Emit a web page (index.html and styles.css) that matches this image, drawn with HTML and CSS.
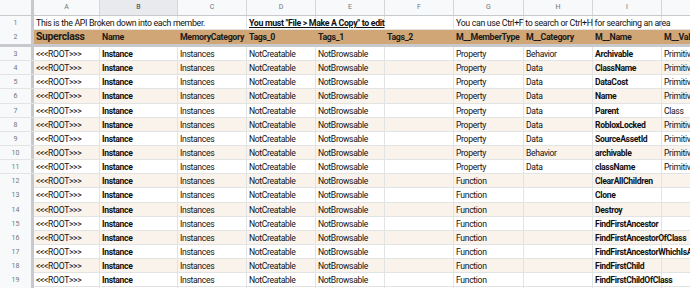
FILE: index.html
```
<!DOCTYPE html>
<html lang="en">
<head>
    <meta charset="UTF-8" />
    <title>API Dump - Sheet</title>
    <link rel="stylesheet" href="styles.css">
</head>
<body>
    <div class="sheet" id="sheet">
        <div class="row letters">
            <div class="rh corner"></div>
            <div class="cl">A</div>
            <div class="cl sel">B</div>
            <div class="cl">C</div>
            <div class="cl">D</div>
            <div class="cl">E</div>
            <div class="cl">F</div>
            <div class="cl">G</div>
            <div class="cl">H</div>
            <div class="cl">I</div>
            <div class="cl">J</div>
        </div>
        <div class="row top">
            <div class="rh">1</div>
            <div class="c spill">This is the API Broken down into each member.</div>
            <div class="c"></div>
            <div class="c"></div>
            <div class="c spill note">You must "File &gt; Make A Copy" to edit</div>
            <div class="c"></div>
            <div class="c"></div>
            <div class="c spill">You can use Ctrl+F to search or Ctrl+H for searching an area</div>
            <div class="c"></div>
            <div class="c"></div>
            <div class="c"></div>
        </div>
        <div class="row head">
            <div class="rh">2</div>
            <div class="c big">Superclass</div>
            <div class="c">Name</div>
            <div class="c">MemoryCategory</div>
            <div class="c">Tags_0</div>
            <div class="c">Tags_1</div>
            <div class="c">Tags_2</div>
            <div class="c">M__MemberType</div>
            <div class="c">M__Category</div>
            <div class="c">M__Name</div>
            <div class="c">M__ValueType</div>
        </div>
    </div>

    <script>
        var members = [
            ['Property', 'Behavior', 'Archivable', 'Primitive'],
            ['Property', 'Data', 'ClassName', 'Primitive'],
            ['Property', 'Data', 'DataCost', 'Primitive'],
            ['Property', 'Data', 'Name', 'Primitive'],
            ['Property', 'Data', 'Parent', 'Class'],
            ['Property', 'Data', 'RobloxLocked', 'Primitive'],
            ['Property', 'Data', 'SourceAssetId', 'Primitive'],
            ['Property', 'Behavior', 'archivable', 'Primitive'],
            ['Property', 'Data', 'className', 'Primitive'],
            ['Function', '', 'ClearAllChildren', ''],
            ['Function', '', 'Clone', ''],
            ['Function', '', 'Destroy', ''],
            ['Function', '', 'FindFirstAncestor', ''],
            ['Function', '', 'FindFirstAncestorOfClass', ''],
            ['Function', '', 'FindFirstAncestorWhichIsA', ''],
            ['Function', '', 'FindFirstChild', ''],
            ['Function', '', 'FindFirstChildOfClass', '']
        ];

        var sheet = document.getElementById('sheet');
        members.forEach(function (m, i) {
            var n = i + 3;
            var row = document.createElement('div');
            row.className = 'row data' + (n % 2 === 0 ? ' alt' : '');
            var spillName = m[3] === '' ? ' spill' : '';
            row.innerHTML =
                '<div class="rh">' + n + '</div>' +
                '<div class="c">&lt;&lt;&lt;ROOT&gt;&gt;&gt;</div>' +
                '<div class="c b">Instance</div>' +
                '<div class="c">Instances</div>' +
                '<div class="c">NotCreatable</div>' +
                '<div class="c">NotBrowsable</div>' +
                '<div class="c"></div>' +
                '<div class="c">' + m[0] + '</div>' +
                '<div class="c">' + m[1] + '</div>' +
                '<div class="c b' + spillName + '">' + m[2] + '</div>' +
                '<div class="c">' + m[3] + '</div>';
            sheet.appendChild(row);
        });
    </script>
</body>
</html>
```

FILE: styles.css
```
body {
    margin: 0;
    width: 690px;
    height: 288px;
    overflow: hidden;
    background: #fff;
    font-family: 'Roboto', sans-serif;
    color: #111;
}
.sheet {
    width: 800px;
}
.row {
    display: grid;
    grid-template-columns: 34px 66px 78px 69px 69px 69px 69px 70px 69px 69px 120px;
    height: 14px;
    box-sizing: border-box;
    border-bottom: 1px solid #e2e3e3;
}
.row > div {
    box-sizing: border-box;
    border-right: 1px solid #e2e3e3;
    white-space: nowrap;
    overflow: hidden;
}
.rh {
    background: #f8f9fa;
    color: #70757a;
    font-size: 7px;
    text-align: center;
    line-height: 14px;
    border-right: 3px solid #c7c9cc !important;
}
.letters {
    height: 16px;
    background: #f8f9fa;
    border-bottom: 1px solid #c7c9cc;
}
.cl {
    color: #70757a;
    font-size: 7px;
    text-align: center;
    line-height: 15px;
    border-right-color: #d4d6d8 !important;
}
.cl.sel {
    background: #e8eaed;
    color: #3c4043;
}
.c {
    font-size: 8.6px;
    letter-spacing: -0.33px;
    line-height: 14px;
    padding: 0 2px;
}
.row > .spill {
    overflow: visible;
    position: relative;
    z-index: 1;
}
.top .c {
    font-size: 8.8px;
}
.note {
    font-weight: 700;
    text-decoration: underline;
}
.head {
    background: #d0a676;
    border-bottom: 3px solid #c7c9cc;
    height: 17px;
}
.head .c {
    font-weight: 700;
    font-size: 8.8px;
    border-right-color: #d0a676;
    color: #1a1a1a;
}
.head .c.big {
    font-size: 10.4px;
    line-height: 13px;
}
.data {
    height: 14.15px;
}
.data .c {
    line-height: 15px;
}
.alt {
    background: #faf3ec;
}
.b {
    font-weight: 700;
}
```
